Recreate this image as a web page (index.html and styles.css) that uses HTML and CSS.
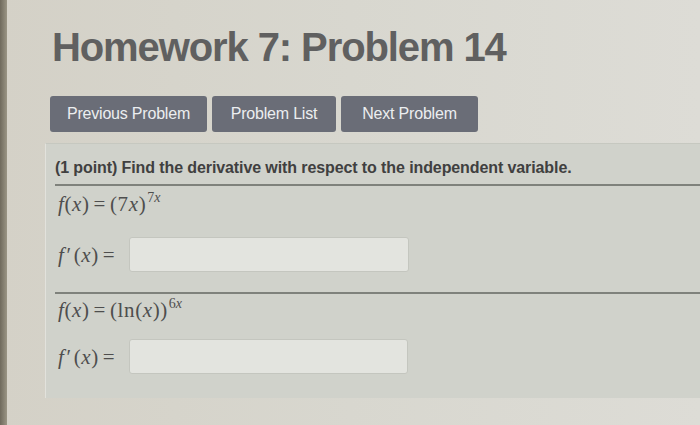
FILE: index.html
```html
<!DOCTYPE html>
<html>
<head>
<meta charset="utf-8">
<link rel="stylesheet" href="styles.css">
</head>
<body>
<div class="page">
  <div class="edge"></div>
  <div class="main">
    <h1 class="title">Homework 7: Problem 14</h1>
    <div class="nav">
      <span class="btn btn-prev">Previous Problem</span>
      <span class="btn btn-list">Problem List</span>
      <span class="btn btn-next">Next Problem</span>
    </div>
    <div class="problem">
      <div class="intro">(1 point) Find the derivative with respect to the independent variable.</div>
      <div class="rule"></div>
      <div class="part">
        <div class="eq"><i>f</i>(<i>x</i>)<span class="op">=</span>(7<i>x</i>)<sup><span>7</span><i>x</i></sup></div>
        <div class="answer"><span class="eq"><i>f</i><span class="prime">′</span>(<i>x</i>)<span class="op">=</span></span><span class="field"></span></div>
      </div>
      <div class="rule rule2"></div>
      <div class="part part2">
        <div class="eq"><i>f</i>(<i>x</i>)<span class="op">=</span>(ln(<i>x</i>))<sup><span>6</span><i>x</i></sup></div>
        <div class="answer"><span class="eq"><i>f</i><span class="prime">′</span>(<i>x</i>)<span class="op">=</span></span><span class="field field2"></span></div>
      </div>
    </div>
  </div>
</div>
</body>
</html>
```

FILE: styles.css
```css
html, body {
  margin: 0;
  padding: 0;
  height: 100%;
}
body {
  background: linear-gradient(90deg, #d4d1c7 0%, #d8d7cf 50%, #dddcd6 100%);
  font-family: "Liberation Sans", Arial, sans-serif;
  overflow: hidden;
}
.page {
  display: flex;
  height: 425px;
}
.edge {
  width: 7px;
  flex: none;
  background: linear-gradient(90deg, #6f6a5d, #9a9585);
}
.main {
  flex: 1;
  padding-left: 38px;
  display: flex;
  flex-direction: column;
}
.title {
  margin: 25px 0 0 7px;
  font-size: 40px;
  line-height: 44px;
  font-weight: bold;
  color: #606060;
  letter-spacing: -1.1px;
}
.nav {
  display: flex;
  gap: 5px;
  margin: 27px 0 0 5px;
}
.btn {
  height: 36px;
  line-height: 36px;
  background: #6a6d77;
  color: #eceef0;
  font-size: 16px;
  border-radius: 3px;
  text-align: center;
  letter-spacing: -0.2px;
}
.btn-prev { width: 157px; }
.btn-list { width: 124px; }
.btn-next { width: 137px; }
.problem {
  margin-top: 11px;
  height: 254px;
  background: #d0d2cb;
  border-top: 1px solid #c6c8c0;
  border-left: 1px solid #e2e2dc;
  padding-left: 9px;
}
.intro {
  margin-top: 14px;
  font-size: 16px;
  font-weight: bold;
  color: #404040;
  line-height: 20px;
  letter-spacing: -0.1px;
}
.rule {
  height: 2px;
  background: #7f827c;
  margin-top: 6px;
}
.rule2 {
  margin-top: 20px;
}
.part {
  padding-top: 6px;
}
.part2 {
  padding-top: 4px;
}
.eq {
  font-family: "Liberation Serif", "Times New Roman", serif;
  font-size: 21px;
  color: #4e4e4e;
  line-height: 24px;
  letter-spacing: 0.6px;
  margin-left: 3px;
}
.op {
  margin: 0 4px;
}
.prime {
  margin-left: 2px;
  margin-right: 2px;
}
.eq sup {
  font-size: 14px;
  vertical-align: 9px;
  line-height: 0;
  margin-left: 1px;
  letter-spacing: 0;
}
.answer {
  display: flex;
  align-items: center;
  gap: 10px;
  margin-top: 21px;
}
.answer .eq {
  margin-left: 3px;
}
.field {
  width: 278px;
  height: 33px;
  background: #e3e4df;
  border: 1px solid #c4c6bf;
  border-radius: 3px;
}
.part2 .answer {
  margin-top: 17px;
}
.field2 {
  width: 277px;
}
```
